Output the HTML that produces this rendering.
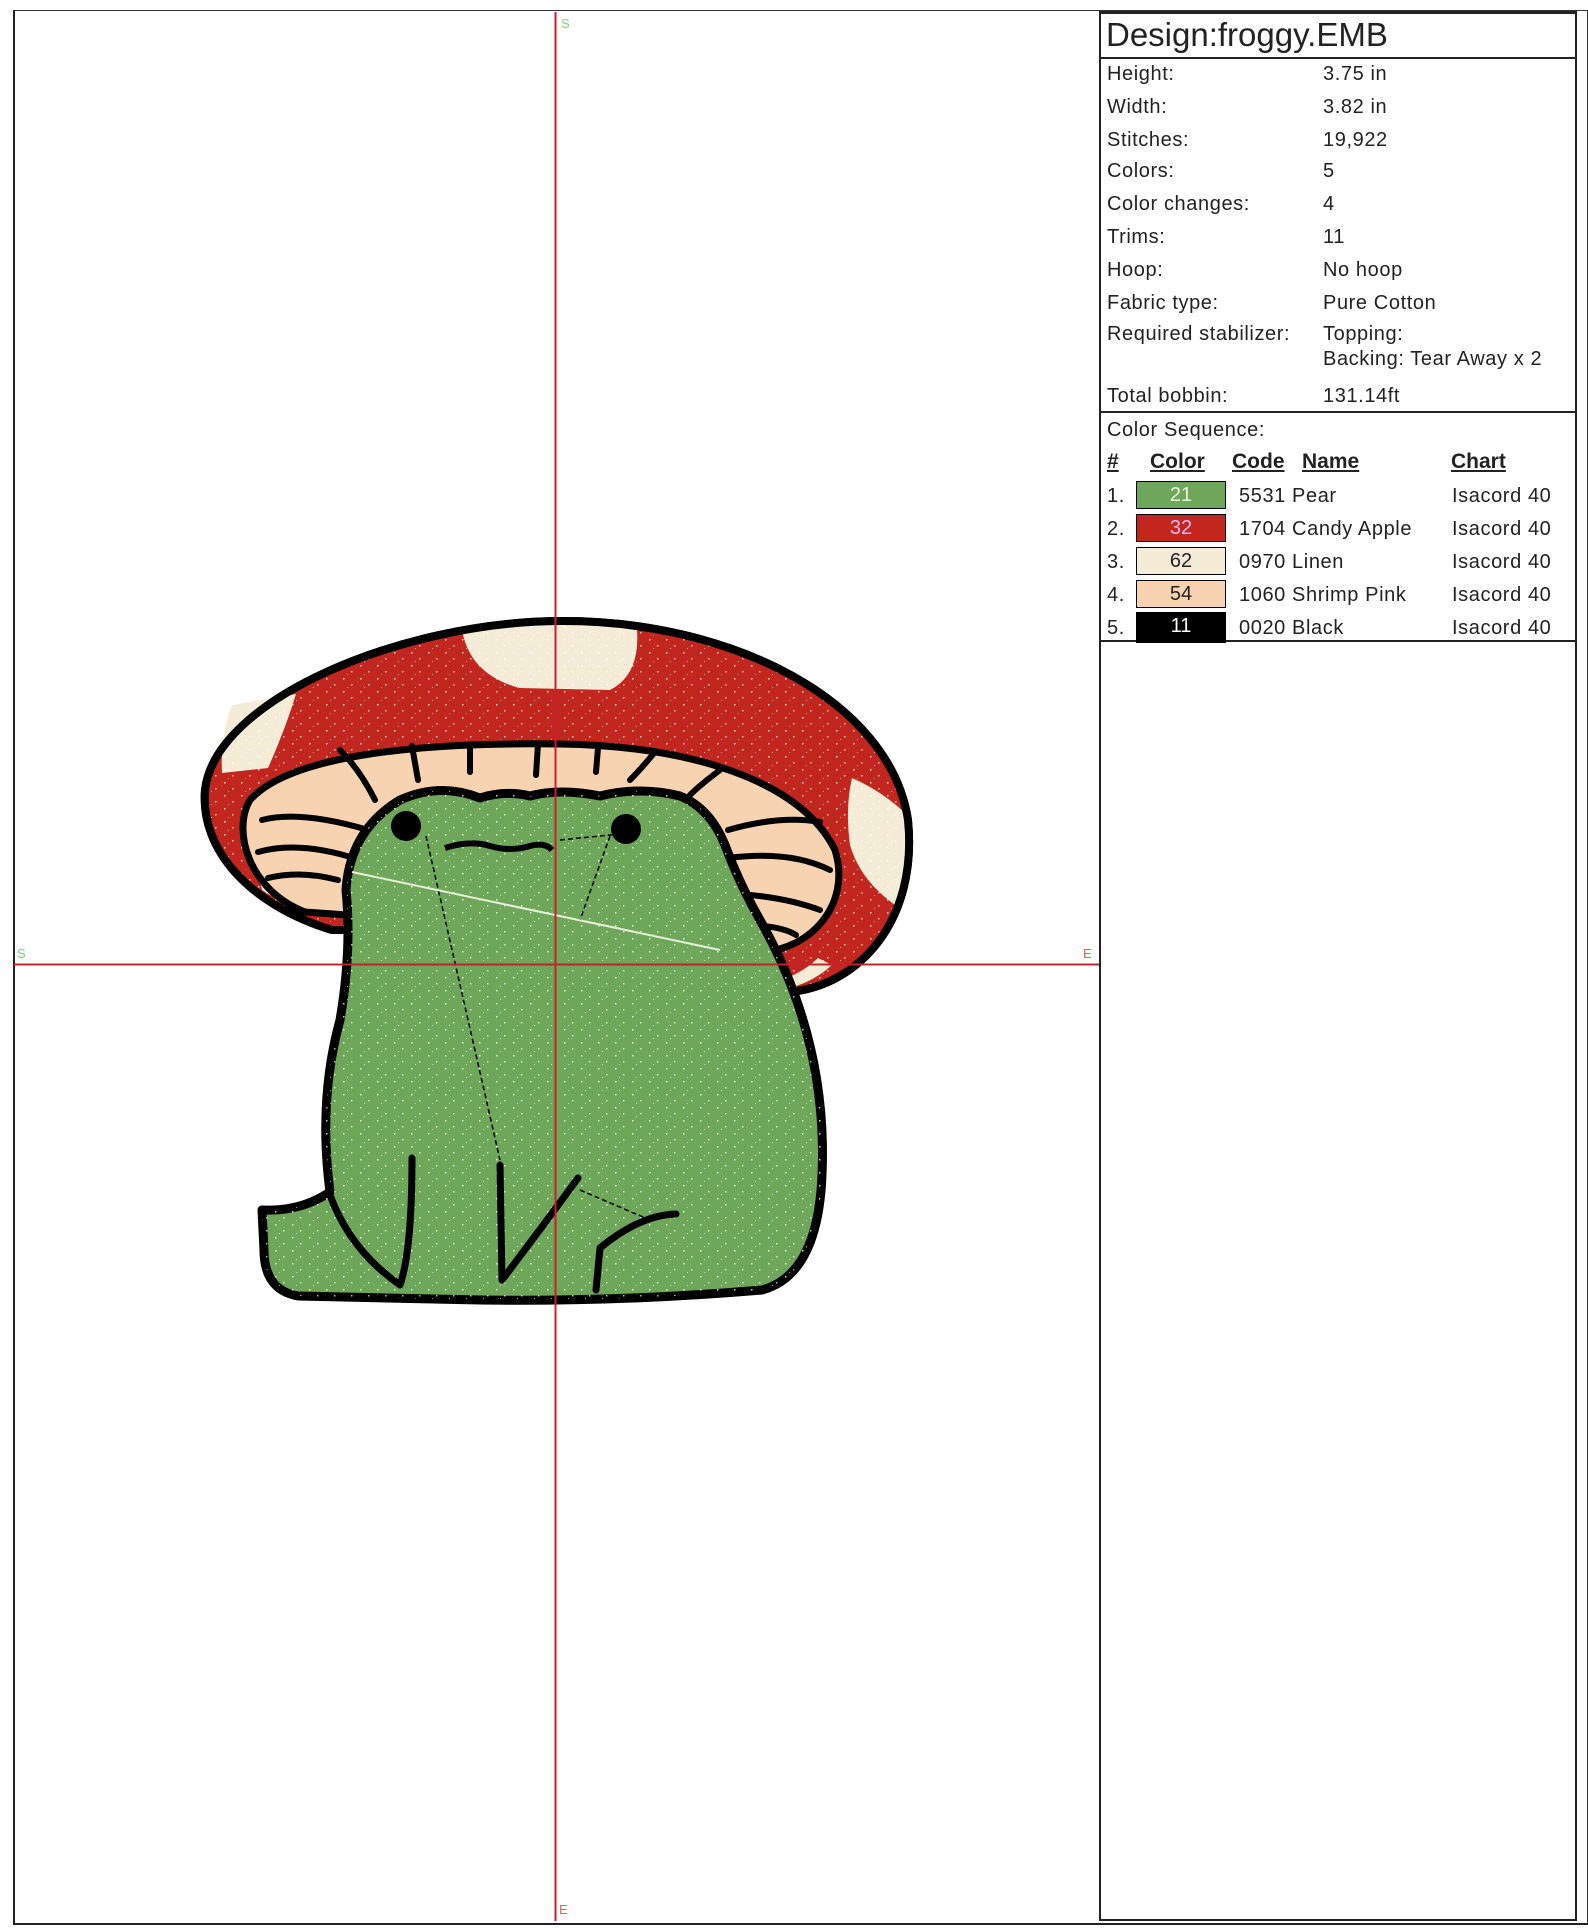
<!DOCTYPE html>
<html><head><meta charset="utf-8"><style>
html,body{margin:0;padding:0;background:#fff;width:1588px;height:1928px;overflow:hidden;position:relative;font-family:"Liberation Sans",Arial,sans-serif;color:#222}
.a{position:absolute}
.r{position:absolute;font-size:20px;line-height:24px;white-space:nowrap;letter-spacing:0.6px}
.h{position:absolute;font-size:21px;font-weight:bold;text-decoration:underline;white-space:nowrap}
.sw{position:absolute;left:1136px;width:88px;height:26px;border:1px solid #000;text-align:center;font-size:20px;line-height:26px}
</style></head><body>
<div class="a" style="left:13px;top:10px;width:1572px;height:1912px;border:1.5px solid #333;border-left:2px solid #222;border-bottom:2px solid #222"></div>
<div class="a" style="left:1099px;top:11px;width:2px;height:1910px;background:#222"></div>
<div class="a" style="left:1100px;top:11px;width:477px;height:1910px;border:2px solid #222;box-sizing:border-box;border-left:none;border-top:3px solid #222"></div>
<div class="a" style="left:1100px;top:57px;width:477px;height:2px;background:#222"></div>
<div class="a" style="left:1100px;top:411px;width:477px;height:2px;background:#222"></div>
<div class="a" style="left:1100px;top:640px;width:477px;height:2px;background:#222"></div>
<div class="a" style="left:1106px;top:13px;font-size:33px;line-height:44px;color:#222">Design:froggy.EMB</div>

<svg class="a" style="left:0;top:0" width="1100" height="1928" viewBox="0 0 1100 1928">
<defs>
<pattern id="dots" width="17" height="13" patternUnits="userSpaceOnUse">
<rect x="3" y="2" width="1.5" height="1.5" fill="#fff" opacity=".8"/><rect x="11" y="8" width="1.5" height="1.5" fill="#fff" opacity=".7"/><rect x="7" y="11" width="1" height="1" fill="#fff" opacity=".6"/>
</pattern>
</defs>
<path d="M332,930 C250,905 200,850 205,790 C215,700 400,622 560,621 C730,620 890,700 908,820 C918,920 860,985 790,992 L740,990 L700,930 Z" fill="#c1271f" stroke="#000" stroke-width="8"/>
<path d="M462,630 Q470,675 520,688 L610,690 Q640,675 637,630 Q560,618 462,630Z" fill="#f5ecd8"/>
<path d="M232,705 L296,694 Q285,730 268,768 L222,773 Q220,735 232,705Z" fill="#f5ecd8"/>
<path d="M852,778 Q880,790 904,812 Q912,870 895,905 Q860,880 850,845 Q845,808 852,778Z" fill="#f5ecd8"/>
<path d="M258,873 Q275,888 300,896 L306,910 Q285,905 262,890Z" fill="#f5ecd8"/>
<path d="M766,985 Q800,976 818,958 L832,965 Q810,985 780,990Z" fill="#f5ecd8"/>
<path d="M332,930 C250,905 200,850 205,790 C215,700 400,622 560,621 C730,620 890,700 908,820 C918,920 860,985 790,992 L740,990" fill="url(#dots)" stroke="#000" stroke-width="8"/>
<path d="M305,912 C248,890 232,830 250,800 C290,755 420,742 560,744 C690,746 800,780 835,850 C852,905 810,950 760,952 L700,940 Z" fill="#f7d3b2" stroke="#000" stroke-width="7"/>
<g stroke="#000" stroke-width="6" fill="none" stroke-linecap="round">
<path d="M262,820 Q300,810 368,830"/><path d="M258,852 Q300,840 360,860"/><path d="M268,878 Q300,870 338,880"/>
<path d="M340,750 Q360,770 375,800"/><path d="M412,746 L418,780"/><path d="M470,744 L470,772"/><path d="M538,744 L536,775"/>
<path d="M598,748 L596,772"/><path d="M655,752 Q640,770 630,780"/><path d="M720,770 Q700,785 690,795"/>
<path d="M728,830 Q780,815 820,822"/><path d="M728,858 Q790,850 830,870"/><path d="M720,893 Q780,895 820,910"/><path d="M740,925 Q780,925 796,935"/>
</g>
<path d="M400,800 Q440,782 480,798 Q505,790 530,796 Q560,788 600,796 Q640,786 680,796 Q710,808 725,845 Q740,885 760,920 Q828,1040 822,1175 Q818,1275 762,1290 Q620,1302 480,1300 L298,1296 Q264,1290 264,1250 L262,1210 Q300,1212 330,1192 Q318,1100 340,1020 Q352,950 346,890 Q350,830 400,800Z" fill="#6ea65a" stroke="#000" stroke-width="9" stroke-linejoin="round"/>
<path d="M400,800 Q440,782 480,798 Q505,790 530,796 Q560,788 600,796 Q640,786 680,796 Q710,808 725,845 Q740,885 760,920 Q828,1040 822,1175 Q818,1275 762,1290 Q620,1302 480,1300 L298,1296 Q264,1290 264,1250 L262,1210 Q300,1212 330,1192 Q318,1100 340,1020 Q352,950 346,890 Q350,830 400,800Z" fill="url(#dots)"/>
<circle cx="406" cy="826" r="15" fill="#000"/><circle cx="626" cy="829" r="15" fill="#000"/>
<path d="M445,848 Q470,840 490,846 Q510,852 530,846 Q545,842 552,850" stroke="#000" stroke-width="6" fill="none"/>
<g stroke="#000" stroke-width="1.5" stroke-dasharray="5,3" fill="none">
<path d="M426,836 L500,1160"/><path d="M610,836 L580,920"/><path d="M560,840 L620,834"/><path d="M580,1190 L650,1220"/>
</g>
<path d="M352,872 L720,950" stroke="#e8f0d8" stroke-width="2" fill="none"/>
<g stroke="#000" stroke-width="7" fill="none" stroke-linecap="round" stroke-linejoin="round">
<path d="M330,1195 Q350,1250 400,1285 Q412,1250 412,1158"/>
<path d="M500,1165 L502,1280 Q540,1230 578,1178"/>
<path d="M596,1290 L600,1248 Q640,1215 676,1214"/>
</g>
<line x1="555.5" y1="12" x2="555.5" y2="1921" stroke="#c8202c" stroke-width="2"/>
<line x1="14" y1="964.5" x2="1099" y2="964.5" stroke="#c8202c" stroke-width="2"/>
<text x="561" y="28" font-family="Liberation Sans" font-size="13" fill="#7ed07e">S</text>
<text x="17" y="958" font-family="Liberation Sans" font-size="13" fill="#7ed07e">S</text>
<text x="1083" y="958" font-family="Liberation Sans" font-size="13" fill="#e06060">E</text>
<text x="559" y="1914" font-family="Liberation Sans" font-size="13" fill="#e06060">E</text>
</svg>

<div class="r" style="left:1107px;top:62px">Height:</div><div class="r" style="left:1323px;top:62px">3.75 in</div>
<div class="r" style="left:1107px;top:95px">Width:</div><div class="r" style="left:1323px;top:95px">3.82 in</div>
<div class="r" style="left:1107px;top:128px">Stitches:</div><div class="r" style="left:1323px;top:128px">19,922</div>
<div class="r" style="left:1107px;top:159px">Colors:</div><div class="r" style="left:1323px;top:159px">5</div>
<div class="r" style="left:1107px;top:192px">Color changes:</div><div class="r" style="left:1323px;top:192px">4</div>
<div class="r" style="left:1107px;top:225px">Trims:</div><div class="r" style="left:1323px;top:225px">11</div>
<div class="r" style="left:1107px;top:258px">Hoop:</div><div class="r" style="left:1323px;top:258px">No hoop</div>
<div class="r" style="left:1107px;top:291px">Fabric type:</div><div class="r" style="left:1323px;top:291px">Pure Cotton</div>
<div class="r" style="left:1107px;top:322px">Required stabilizer:</div><div class="r" style="left:1323px;top:322px">Topping:</div>
<div class="r" style="left:1323px;top:347px">Backing: Tear Away x 2</div>
<div class="r" style="left:1107px;top:384px">Total bobbin:</div><div class="r" style="left:1323px;top:384px">131.14ft</div>

<div class="r" style="left:1107px;top:418px">Color Sequence:</div>
<div class="h" style="left:1107px;top:450px">#</div>
<div class="h" style="left:1150px;top:450px">Color</div>
<div class="h" style="left:1232px;top:450px">Code</div>
<div class="h" style="left:1302px;top:450px">Name</div>
<div class="h" style="left:1451px;top:450px">Chart</div>

<div class="r" style="left:1107px;top:484px">1.</div><div class="sw" style="top:481px;background:#6ea65a;color:#e8f5e0">21</div><div class="r" style="left:1239px;top:484px">5531 Pear</div><div class="r" style="left:1452px;top:484px">Isacord 40</div>
<div class="r" style="left:1107px;top:517px">2.</div><div class="sw" style="top:514px;background:#c1271f;color:#fbe">32</div><div class="r" style="left:1239px;top:517px">1704 Candy Apple</div><div class="r" style="left:1452px;top:517px">Isacord 40</div>
<div class="r" style="left:1107px;top:550px">3.</div><div class="sw" style="top:547px;background:#f5ecd8">62</div><div class="r" style="left:1239px;top:550px">0970 Linen</div><div class="r" style="left:1452px;top:550px">Isacord 40</div>
<div class="r" style="left:1107px;top:583px">4.</div><div class="sw" style="top:580px;background:#f7d3b2">54</div><div class="r" style="left:1239px;top:583px">1060 Shrimp Pink</div><div class="r" style="left:1452px;top:583px">Isacord 40</div>
<div class="r" style="left:1107px;top:616px">5.</div><div class="sw" style="top:612px;background:#000;color:#fff;height:29px">11</div><div class="r" style="left:1239px;top:616px">0020 Black</div><div class="r" style="left:1452px;top:616px">Isacord 40</div>
</body></html>
